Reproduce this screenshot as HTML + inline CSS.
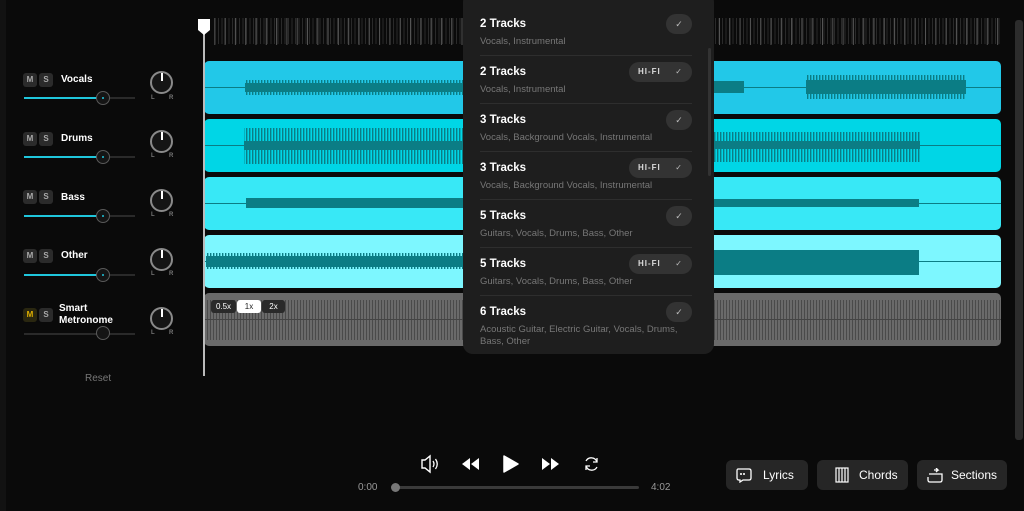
<!DOCTYPE html>
<html><head><meta charset="utf-8"><style>
*{margin:0;padding:0;box-sizing:border-box}
body{width:1024px;height:511px;background:#0a0a0a;font-family:"Liberation Sans",sans-serif;position:relative;overflow:hidden;color:#fff}
.abs{position:absolute}
.ms{position:absolute;width:14px;height:14px;background:#2b2b2b;border-radius:3px;font-size:8px;font-weight:bold;color:#aaa;text-align:center;line-height:14px}
.lbl{position:absolute;font-size:10px;font-weight:bold;color:#fff;left:61px}
.sl{position:absolute;left:24px;width:111px;height:2px;background:#2a2a2a}
.sl i{position:absolute;left:0;top:0;height:2px;width:79px;background:#1fc6dc}
.kn{position:absolute;left:72px;top:-6px;width:14px;height:14px;border-radius:50%;background:#151515;border:1.5px solid #5a5a5a}
.kn b{position:absolute;left:5px;top:5px;width:2px;height:2px;background:#1fc6dc;border-radius:50%}
.pan{position:absolute;left:150px;width:23px;height:23px;border-radius:50%;border:2px solid #8a8a8a;background:#151515}
.pan:after{content:"";position:absolute;left:9px;top:0;width:2px;height:8px;background:#fff}
.lr{position:absolute;font-size:6px;color:#777;font-weight:bold}
.dd{position:absolute;left:463px;top:-8px;width:251px;height:362px;background:#1e1e1e;border-radius:10px}
.it{position:absolute;left:17px;width:212px;height:48px;border-bottom:1px solid #2e2e2e}
.it h4{position:absolute;top:10px;left:0;font-size:11.5px;font-weight:bold;color:#fff}
.it p{position:absolute;top:28px;left:0;font-size:9.5px;color:#777;line-height:12px}
.ck{position:absolute;right:0;top:6px;width:26px;height:20px;border-radius:10px;background:#333;color:#bbb;font-size:9px;text-align:center;line-height:20px}
.hf{position:absolute;right:0;top:6px;width:63px;height:20px;border-radius:10px;background:#333;color:#ddd;font-size:8px;font-weight:bold;line-height:20px;padding-left:9px;letter-spacing:1px}
.hf span{position:absolute;right:9px;color:#bbb;font-weight:normal}
.btn{position:absolute;top:460px;height:30px;background:#262626;border-radius:6px;font-size:12px;color:#fff;line-height:30px}
</style></head><body>
<div class="abs" style="left:0;top:0;width:6px;height:511px;background:#121212"></div>

<div class="ms" style="left:23px;top:73px">M</div><div class="ms" style="left:39px;top:73px">S</div><div class="lbl" style="top:74px">Vocals</div>
<div class="sl" style="top:97px"><i></i><div class="kn"><b></b></div></div>
<div class="pan" style="top:71px"></div><div class="lr" style="left:151px;top:95px">L</div><div class="lr" style="left:169px;top:95px">R</div>

<div class="ms" style="left:23px;top:132px">M</div><div class="ms" style="left:39px;top:132px">S</div><div class="lbl" style="top:133px">Drums</div>
<div class="sl" style="top:156px"><i></i><div class="kn"><b></b></div></div>
<div class="pan" style="top:130px"></div><div class="lr" style="left:151px;top:153px">L</div><div class="lr" style="left:169px;top:153px">R</div>

<div class="ms" style="left:23px;top:190px">M</div><div class="ms" style="left:39px;top:190px">S</div><div class="lbl" style="top:192px">Bass</div>
<div class="sl" style="top:215px"><i></i><div class="kn"><b></b></div></div>
<div class="pan" style="top:189px"></div><div class="lr" style="left:151px;top:212px">L</div><div class="lr" style="left:169px;top:212px">R</div>

<div class="ms" style="left:23px;top:249px">M</div><div class="ms" style="left:39px;top:249px">S</div><div class="lbl" style="top:250px">Other</div>
<div class="sl" style="top:274px"><i></i><div class="kn"><b></b></div></div>
<div class="pan" style="top:248px"></div><div class="lr" style="left:151px;top:271px">L</div><div class="lr" style="left:169px;top:271px">R</div>

<div class="ms" style="left:23px;top:308px;color:#e0b000;background:#2a2710">M</div><div class="ms" style="left:39px;top:308px">S</div>
<div class="lbl" style="top:303px;left:59px;line-height:12px">Smart<br>Metronome</div>
<div class="sl" style="top:333px"><div class="kn" style="top:-7px"></div></div>
<div class="pan" style="top:307px"></div><div class="lr" style="left:151px;top:330px">L</div><div class="lr" style="left:169px;top:330px">R</div>
<div class="abs" style="left:85px;top:373px;font-size:10px;color:#777">Reset</div>

<svg class="abs" style="left:204px;top:18px" width="800" height="30">
<defs><pattern id="tk" width="3.5" height="30" patternUnits="userSpaceOnUse"><rect x="0" y="0" width="1" height="26" fill="#2a2a2a"/></pattern>
<pattern id="tk2" width="10.3" height="30" patternUnits="userSpaceOnUse"><rect x="0" y="0" width="1" height="27" fill="#555"/></pattern></defs>
<rect x="8" y="0" width="788" height="28" fill="url(#tk)"/><rect x="8" y="0" width="788" height="28" fill="url(#tk2)"/>
</svg>

<svg class="abs" style="left:0;top:0" width="1024" height="511">
<defs>
<pattern id="st" width="3" height="60" patternUnits="userSpaceOnUse"><rect width="1.4" height="60" fill="#0b7d85"/></pattern>
<pattern id="sg" width="3" height="60" patternUnits="userSpaceOnUse"><rect width="1" height="60" fill="#4a4a4a"/></pattern>
</defs>
<rect x="204" y="61" width="797" height="53" rx="5" fill="#22c8e8"/>
<rect x="204" y="119" width="797" height="53" rx="5" fill="#00d6e6"/>
<rect x="204" y="177" width="797" height="53" rx="5" fill="#38e8f6"/>
<rect x="204" y="235" width="797" height="53" rx="5" fill="#7df7ff"/>
<rect x="204" y="293" width="797" height="53" rx="5" fill="#6a6a6a"/>
<g fill="#0b7d85">
<rect x="204" y="87" width="797" height="1"/>
<rect x="245" y="80" width="295" height="15" fill="url(#st)"/><rect x="245" y="83" width="295" height="9"/>
<rect x="714" y="81" width="30" height="12"/>
<rect x="806" y="75" width="160" height="24" fill="url(#st)"/><rect x="806" y="80" width="160" height="14"/>
<rect x="204" y="145" width="797" height="1"/>
<rect x="244" y="128" width="296" height="36" fill="url(#st)"/><rect x="244" y="141" width="296" height="9"/>
<rect x="714" y="132" width="206" height="30" fill="url(#st)"/><rect x="714" y="141" width="206" height="8"/>
<rect x="204" y="203" width="797" height="1"/>
<rect x="246" y="198" width="294" height="10"/>
<rect x="714" y="199" width="205" height="8"/>
<rect x="204" y="261" width="797" height="1"/>
<rect x="206" y="253" width="334" height="16" fill="url(#st)"/><rect x="206" y="256" width="334" height="11"/>
<rect x="714" y="250" width="205" height="25"/>
</g>
<rect x="204" y="300" width="797" height="40" fill="url(#sg)"/>
<rect x="204" y="319" width="797" height="1" fill="#444"/>
</svg>
<div class="abs" style="left:211px;top:300px;width:25px;height:13px;background:#2a2a2a;border-radius:3px;font-size:8px;line-height:13px;text-align:center">0.5x</div>
<div class="abs" style="left:237px;top:300px;width:24px;height:13px;background:#fff;color:#222;border-radius:3px;font-size:8px;line-height:13px;text-align:center">1x</div>
<div class="abs" style="left:262px;top:300px;width:23px;height:13px;background:#2a2a2a;border-radius:3px;font-size:8px;line-height:13px;text-align:center">2x</div>

<div class="abs" style="left:203px;top:30px;width:2px;height:346px;background:#bbb"></div>
<svg class="abs" style="left:197px;top:18px" width="14" height="18"><path d="M1 1H13V12L7 17L1 12Z" fill="#fff"/></svg>

<div class="abs" style="left:1015px;top:20px;width:8px;height:420px;background:#2c2c2c;border-radius:3px"></div>

<div class="dd">
<div class="abs" style="left:245px;top:56px;width:3px;height:128px;background:#333;border-radius:2px"></div>
<div class="it" style="top:16px"><h4>2 Tracks</h4><p>Vocals, Instrumental</p><div class="ck">✓</div></div>
<div class="it" style="top:64px"><h4>2 Tracks</h4><p>Vocals, Instrumental</p><div class="hf">HI-FI<span>✓</span></div></div>
<div class="it" style="top:112px"><h4>3 Tracks</h4><p>Vocals, Background Vocals, Instrumental</p><div class="ck">✓</div></div>
<div class="it" style="top:160px"><h4>3 Tracks</h4><p>Vocals, Background Vocals, Instrumental</p><div class="hf">HI-FI<span>✓</span></div></div>
<div class="it" style="top:208px"><h4>5 Tracks</h4><p>Guitars, Vocals, Drums, Bass, Other</p><div class="ck">✓</div></div>
<div class="it" style="top:256px"><h4>5 Tracks</h4><p>Guitars, Vocals, Drums, Bass, Other</p><div class="hf">HI-FI<span>✓</span></div></div>
<div class="it" style="top:304px;border:none"><h4>6 Tracks</h4><p>Acoustic Guitar, Electric Guitar, Vocals, Drums,<br>Bass, Other</p><div class="ck">✓</div></div>
</div>

<svg class="abs" style="left:420px;top:453px" width="185" height="22" fill="#fff" stroke="#fff">
<path d="M2 7H5L10 3V19L5 15H2Z" fill="none" stroke-width="1.4"/><path d="M13 8Q15 11 13 14M15.5 6Q19 11 15.5 16" fill="none" stroke-width="1.3"/>
<path d="M42 11L50 5V17ZM51 11L59 5V17Z" stroke="none"/>
<path d="M84 3L98 11L84 19Z" stroke-width="1.5" stroke-linejoin="round"/>
<path d="M122 5L130 11L122 17ZM131 5L139 11L131 17Z" stroke="none"/>
<path d="M166 8A6 6 0 0 1 177 9M177 14A6 6 0 0 1 166 13" fill="none" stroke-width="1.3"/><path d="M177 5V9H173M166 17V13H170" fill="none" stroke-width="1.3"/>
</svg>
<div class="abs" style="left:358px;top:482px;font-size:10px;color:#999">0:00</div>
<div class="abs" style="left:396px;top:486px;width:243px;height:3px;background:#3a3a3a;border-radius:2px"></div>
<div class="abs" style="left:391px;top:483px;width:9px;height:9px;background:#777;border-radius:50%"></div>
<div class="abs" style="left:651px;top:482px;font-size:10px;color:#999">4:02</div>

<div class="btn" style="left:726px;width:82px"><svg class="abs" style="left:10px;top:8px" width="16" height="15" fill="none" stroke="#fff" stroke-width="1.3"><path d="M2 1H13Q15 1 15 3V10Q15 12 13 12H7L4 14V12H3Q1 12 1 10V3Q1 1 2 1Z"/><path d="M5 5V7M8 5V7" stroke-width="1.6"/></svg><span style="position:absolute;left:37px">Lyrics</span></div>
<div class="btn" style="left:817px;width:91px"><svg class="abs" style="left:18px;top:7px" width="14" height="16" fill="none" stroke="#fff" stroke-width="1.2"><rect x="1" y="1" width="12" height="14"/><path d="M4 1V15M7 1V15M10 1V15"/></svg><span style="position:absolute;left:42px">Chords</span></div>
<div class="btn" style="left:917px;width:90px"><svg class="abs" style="left:9px;top:8px" width="18" height="15" fill="none" stroke="#fff" stroke-width="1.3"><path d="M3 6H16V12Q16 14 14 14H4Q2 14 2 12V9"/><path d="M8 2H12L10 0M12 2L10 4"/></svg><span style="position:absolute;left:34px">Sections</span></div>
</body></html>
